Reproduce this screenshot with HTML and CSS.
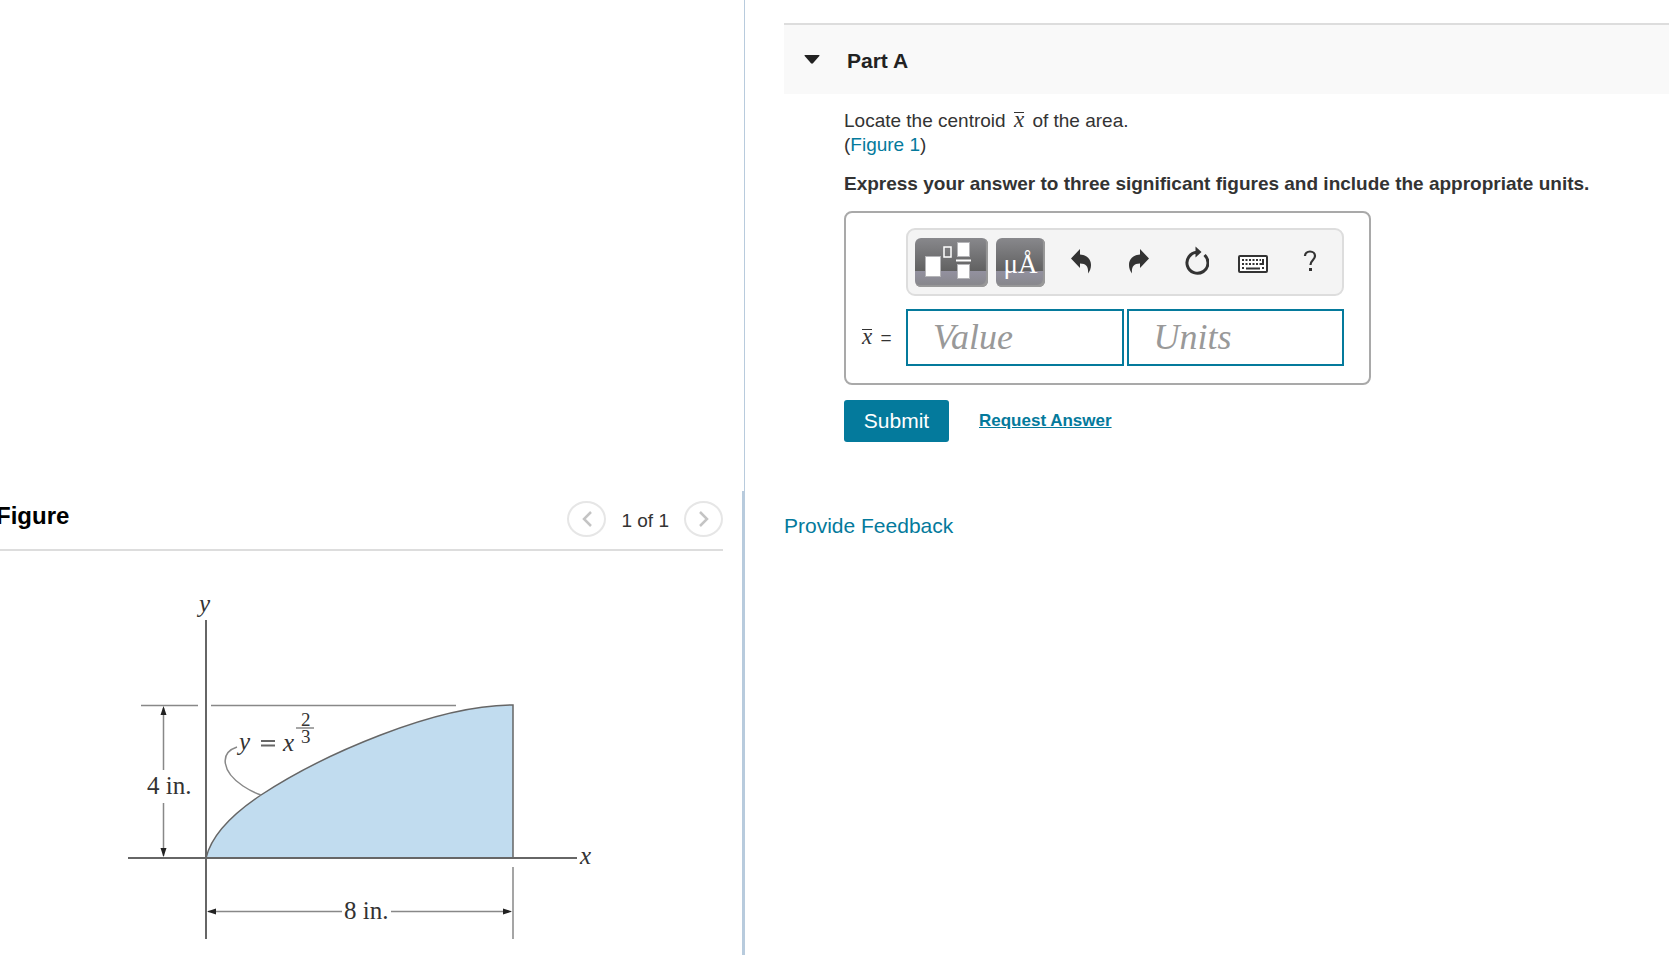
FILE: index.html
```html
<!DOCTYPE html>
<html lang="en">
<head>
    <meta charset="UTF-8">
    <meta name="viewport" content="width=device-width, initial-scale=1.0">
    <title>Part A</title>
    <link rel="stylesheet" href="styles.css">
</head>
<body>
    <div class="page">
        <!-- left side: empty problem pane on top, figure below -->
        <div class="left">
            <div class="problem-pane"></div>

            <section class="figure-pane" id="figure1">
                <div class="figure-header">
                    <h2>Figure</h2>
                    <div class="pager">
                        <button class="pager-btn" type="button" aria-label="Previous figure">
                            <svg width="12" height="18" viewBox="0 0 12 18"><path d="M10 2L3 9l7 7"/></svg>
                        </button>
                        <span>1 of 1</span>
                        <button class="pager-btn" type="button" aria-label="Next figure">
                            <svg width="12" height="18" viewBox="0 0 12 18"><path d="M2 2l7 7-7 7"/></svg>
                        </button>
                    </div>
                </div>

                <svg class="diagram" width="500" height="372" viewBox="0 0 500 372">
                    <path class="area" d="M96 278C101 257 121 235 151 215C212 175 325 125 403 125V278Z"/>
                    <path class="curve" d="M96 278C101 257 121 235 151 215C212 175 325 125 403 125V278"/>
                    <!-- axes -->
                    <path class="axis" d="M96 40V359M18 278H467"/>
                    <!-- dimension lines -->
                    <path class="thin" d="M31 125.500H88M101 125.500H346M53.500 128V190M53.500 223V276M403 287V359M98 331.500H232M281 331.500H401"/>
                    <path class="thin" d="M127 167C109 173 112 192 133 206C139 210 145 213 151 215"/>
                    <path class="arrow" d="M53.500 126l-3 9h6zM53.500 277l-3-9h6zM97 331.500l9-3v6zM402 331.500l-9-3v6z"/>
                    <text class="it" x="89" y="32">y</text>
                    <text class="it" x="470" y="284">x</text>
                    <text x="37" y="214">4 in.</text>
                    <text x="234" y="339">8 in.</text>
                    <text class="it" x="129" y="170">y</text>
                    <path class="thick" d="M151 161H165M151 165.500H165"/>
                    <text class="it" x="173" y="171">x</text>
                    <text class="small" x="191" y="146">2</text>
                    <path class="thin" d="M186 148H204"/>
                    <text class="small" x="191" y="163">3</text>
                </svg>
            </section>
        </div>

        <!-- right side: question -->
        <main class="right">
            <button class="part-header" type="button" aria-expanded="true">
                <svg width="16" height="9" viewBox="0 0 16 9"><path d="M1 0H15Q16 0 15.300 1L9 8.300Q8 9 7 8.300L.700 1Q0 0 1 0Z"/></svg>
                <span>Part A</span>
            </button>

            <div class="part-body">
                <p>Locate the centroid <span class="xbar">x</span> of the area.<br>(<a href="#figure1">Figure 1</a>)</p>
                <p class="instructions">Express your answer to three significant figures and include the appropriate units.</p>

                <form class="answer-form">
                    <div class="answer-box">
                        <div class="toolbar">
                            <button class="tool-dark templates" type="button" aria-label="Templates">
                                <svg width="73" height="49" viewBox="0 0 73 49">
                                    <rect x="10.500" y="18.500" width="15" height="20" fill="#fff" stroke="#b5b5b8"/>
                                    <rect x="29" y="9" width="7" height="10" fill="none" stroke="#fff" stroke-width="1.500"/>
                                    <rect x="42.500" y="4.500" width="12" height="14" fill="#fff" stroke="#b5b5b8"/>
                                    <rect x="42.500" y="26.500" width="12" height="14" fill="#fff" stroke="#b5b5b8"/>
                                    <path d="M41 22.500H56" stroke="#fff" stroke-width="2"/>
                                </svg>
                            </button>
                            <button class="tool-dark symbols" type="button">μÅ</button>
                            <button class="tool first" type="button" aria-label="Undo">
                                <svg width="24" height="28" viewBox="0 0 24 28"><path d="M1 11.500L10 2v5.500C17 8 21 12 21 18c0 3-1 6-3 8.500c.500-6-1-10-8-10V21Z"/></svg>
                            </button>
                            <button class="tool" type="button" aria-label="Redo">
                                <svg width="24" height="28" viewBox="0 0 24 28"><path d="M22 11.500L13 2v5.500C6 8 2 12 2 18c0 3 1 6 3 8.500c-.500-6 1-10 8-10V21Z"/></svg>
                            </button>
                            <button class="tool" type="button" aria-label="Reset">
                                <svg width="26" height="30" viewBox="0 0 26 30"><path d="M14 6.300A10.500 10.500 0 1 0 21.500 9" fill="none" stroke="#333" stroke-width="3"/><path d="M12.500 .500L18.500 6L12.500 11.500Z"/></svg>
                            </button>
                            <button class="tool keyboard" type="button" aria-label="Keyboard">
                                <svg width="30" height="18" viewBox="0 0 30 18">
                                    <rect x="1" y="1" width="28" height="16" rx="1" fill="#fff" stroke="#333" stroke-width="2"/>
                                    <path d="M4 5H23M4 9H24M4 13H6M24 13H26" fill="none" stroke="#333" stroke-width="2" stroke-dasharray="2 1.500"/>
                                    <path d="M8 13.500H22M25 4V9H22" fill="none" stroke="#333" stroke-width="2"/>
                                </svg>
                            </button>
                            <button class="tool" type="button" aria-label="Help">
                                <svg width="14" height="22" viewBox="0 0 14 22"><path d="M2 6C2 3.500 4 1.500 7 1.500S12 3.500 12 6C12 10 7.500 10 7.500 15" fill="none" stroke="#333" stroke-width="2.200"/><rect x="6" y="18" width="3" height="3"/></svg>
                            </button>
                        </div>
                        <label for="value"><span class="xbar">x</span> =</label>
                        <div class="inputs">
                            <input id="value" type="text" placeholder="Value">
                            <input id="units" type="text" placeholder="Units" aria-label="Units">
                        </div>
                    </div>

                    <div class="actions">
                        <button class="submit" type="submit">Submit</button>
                        <a class="request" href="#">Request Answer</a>
                    </div>
                </form>
            </div>

            <a class="feedback" href="#">Provide Feedback</a>
        </main>
    </div>
</body>
</html>
```
FILE: styles.css
```css
* {
    box-sizing: border-box;
}

body {
    margin: 0;
    background: #fff;
    color: #333;
    font-family: "Liberation Sans", Arial, sans-serif;
    font-size: 19px;
    line-height: 24px;
}

button {
    padding: 0;
    border: none;
    background: none;
    color: inherit;
    font: inherit;
    cursor: pointer;
}

a {
    color: #047a9c;
    text-decoration: none;
}

.page {
    display: grid;
    grid-template-columns: 745fr 924fr;
    min-height: 100vh;
}

/* left side */
.left {
    display: grid;
    grid-template-rows: 491fr 464fr;
    min-width: 0;
}

.problem-pane {
    border-right: 1px solid #b8cbdd;
}

.figure-pane {
    padding-right: 19px;
    border-right: 3px solid #b8cbdd;
    overflow: hidden;
}

.figure-header {
    display: flex;
    align-items: center;
    justify-content: space-between;
    height: 60px;
    padding-bottom: 2px;
    border-bottom: 2px solid #ddd;
}

.figure-header h2 {
    margin: 0 0 6px -4px;
    color: #000;
    font-size: 24px;
    line-height: 28px;
}

.pager {
    display: flex;
    align-items: center;
    gap: 15px;
    font-size: 19px;
}

.pager span {
    padding-top: 3px;
}

.pager-btn {
    display: flex;
    align-items: center;
    justify-content: center;
    width: 39px;
    height: 36px;
    border: 2px solid #e6e6e6;
    border-radius: 50%;
}

.pager-btn path {
    fill: none;
    stroke: #c4c4c4;
    stroke-width: 2.5;
}

/* diagram */
.diagram {
    display: block;
    margin: 29px 0 0 110px;
    font-family: "Liberation Serif", "Times New Roman", serif;
    font-size: 25px;
    fill: #333;
}

.diagram .it {
    font-style: italic;
}

.diagram .small {
    font-size: 19px;
}

.area {
    fill: #c1dcef;
}

.curve,
.axis,
.thin,
.thick {
    fill: none;
    stroke: #666;
    stroke-width: 2;
}

.curve {
    stroke-width: 1.5;
}

.thin {
    stroke: #888;
    stroke-width: 1.5;
}

.arrow {
    fill: #222;
}

/* right side */
.right {
    min-width: 0;
    padding: 23px 0 0 39px;
}

.part-header {
    display: flex;
    align-items: center;
    gap: 27px;
    width: 100%;
    height: 71px;
    padding-left: 20px;
    border-top: 2px solid #ddd;
    background: #f9f9f9;
    color: #222;
    font-size: 21px;
    font-weight: bold;
}

.part-header span {
    padding-top: 2px;
}

.part-header path {
    fill: #222;
}

.part-body {
    padding: 15px 0 0 60px;
}

.part-body p {
    margin: 0 0 15px;
}

.part-body .instructions {
    font-weight: bold;
}

/* math x with a bar over it */
.xbar {
    display: inline-block;
    margin: 0 3px;
    border-top: 1px solid #333;
    font-family: "Liberation Serif", "Times New Roman", serif;
    font-size: 23px;
    font-style: italic;
    font-weight: normal;
    line-height: 14px;
}

.answer-box {
    display: grid;
    grid-template-columns: 60px 438px;
    row-gap: 13px;
    align-items: center;
    width: fit-content;
    padding: 15px 25px 17px 0;
    border: 2px solid #a9a9a9;
    border-radius: 8px;
}

.answer-box label {
    padding-left: 13px;
}

.toolbar {
    display: flex;
    grid-column: 2;
    align-items: center;
    gap: 8px;
    height: 68px;
    padding: 0 7px;
    border: 2px solid #ddd;
    border-radius: 9px;
    background: #f4f4f4;
}

.tool-dark {
    height: 49px;
    border-radius: 6px;
    background: linear-gradient(#88888c, #616161 67%, #9391a0 67%, #868689);
    box-shadow: inset -2px -2px 1px #999;
    color: #fff;
}

.templates {
    width: 73px;
}

.symbols {
    width: 49px;
    padding-top: 4px;
    font-family: "Liberation Serif", "Times New Roman", serif;
    font-size: 27px;
}

.tool-dark svg {
    display: block;
}

.tool {
    display: flex;
    align-items: center;
    justify-content: center;
    width: 49px;
    height: 49px;
    padding-bottom: 2px;
    fill: #333;
}

.tool.first {
    margin-left: 4px;
}

.tool.keyboard {
    padding: 4px 0 0;
}

.inputs {
    display: flex;
    gap: 3px;
}

.inputs input {
    flex: 1;
    min-width: 0;
    height: 57px;
    padding: 0 25px 2px;
    border: 2px solid #047a9c;
    font-family: "Liberation Serif", "Times New Roman", serif;
    font-size: 36px;
}

.inputs input::placeholder {
    color: #999;
    font-style: italic;
}

.actions {
    display: flex;
    align-items: center;
    gap: 30px;
    margin-top: 15px;
}

.submit {
    width: 105px;
    height: 42px;
    border-radius: 3px;
    background: #047a9c;
    color: #fff;
    font-size: 21px;
}

.request {
    font-size: 17px;
    font-weight: bold;
    text-decoration: underline;
}

.feedback {
    display: inline-block;
    margin-top: 72px;
    font-size: 21px;
}
```
